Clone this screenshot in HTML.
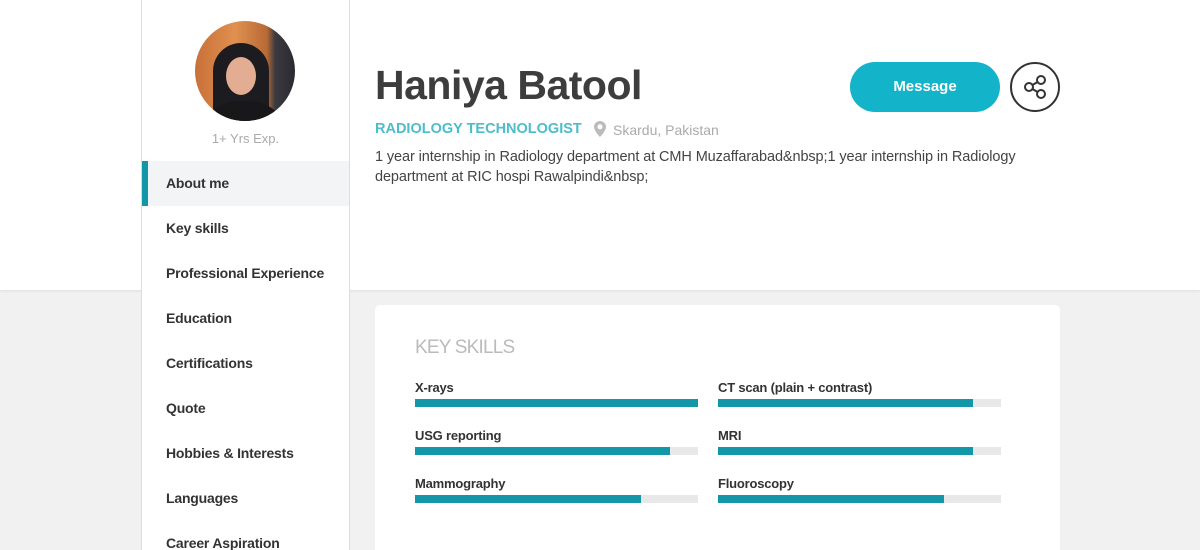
<!DOCTYPE html>
<html><head><style>
*{margin:0;padding:0;box-sizing:border-box}
html,body{width:1200px;height:550px;overflow:hidden}
body{background:#f1f1f1;font-family:"Liberation Sans",sans-serif;position:relative}
.top{position:absolute;left:0;top:0;width:1200px;height:290px;background:#fff;box-shadow:0 1px 3px rgba(0,0,0,.08)}
.side{position:absolute;left:141px;top:0;width:209px;height:550px;background:#fff;border-left:1px solid #ddd;border-right:1px solid #ddd}
.av{position:absolute;left:53px;top:21px;width:100px;height:100px;border-radius:50%;background:linear-gradient(90deg,#c87038,#e09050 40%,#b86a35 72%,#3a3a40 80%,#2a2a30);overflow:hidden}
.av .hj{position:absolute;left:18px;top:22px;width:56px;height:100px;border-radius:28px 28px 10px 10px;background:#1c1c20}
.av .fc{position:absolute;left:31px;top:36px;width:30px;height:38px;border-radius:50%;background:#e2ad92}
.av .sh2{position:absolute;left:4px;top:80px;width:90px;height:40px;border-radius:45px 45px 0 0;background:#18181b}
.exp{position:absolute;top:131px;width:100%;text-align:center;font-size:13px;color:#aaa}
.nav{position:absolute;top:161px;left:0;width:100%}
.nav div{height:45px;line-height:45px;padding-left:24px;font-size:14px;font-weight:bold;color:#333;letter-spacing:-0.2px}
.nav .act{background:#f3f4f6;border-left:6px solid #1297a8;padding-left:18px}
h1{position:absolute;left:375px;top:62px;font-size:41px;color:#3d3d3d;font-weight:bold;letter-spacing:-0.5px}
.role{position:absolute;left:375px;top:121px;font-size:14.5px;color:#4dbccb;font-weight:bold}
.loc{position:absolute;left:594px;top:121px;font-size:14px;color:#aaa}
.desc{position:absolute;left:375px;top:147px;width:690px;font-size:14.5px;line-height:20px;color:#444;letter-spacing:-0.1px}
.msg{position:absolute;left:850px;top:62px;width:150px;height:50px;border-radius:25px;background:#13b3c9;color:#fff;font-weight:bold;font-size:15px;text-align:center;line-height:50px}
.sh{position:absolute;left:1010px;top:62px;width:50px;height:50px;border-radius:50%;border:2px solid #333}
.card{position:absolute;left:375px;top:305px;width:685px;height:260px;background:#fff;border-radius:5px}
.kt{position:absolute;left:40px;top:32px;font-size:19px;color:#bbb;letter-spacing:-0.8px}
.sk{position:absolute;width:283px}
.sk span{display:block;font-size:13px;font-weight:bold;color:#333;height:19px;letter-spacing:-0.2px}
.bar{height:8px;background:#e8e8e8}
.bar i{display:block;height:8px;background:#1297a8}
</style></head><body>
<div class="top"></div>
<div class="side">
<div class="av"><div class="hj"></div><div class="fc"></div><div class="sh2"></div></div>
<div class="exp">1+ Yrs Exp.</div>
<div class="nav">
<div class="act">About me</div><div>Key skills</div><div>Professional Experience</div><div>Education</div><div>Certifications</div><div>Quote</div><div>Hobbies &amp; Interests</div><div>Languages</div><div>Career Aspiration</div>
</div></div>
<h1>Haniya Batool</h1>
<div class="role">RADIOLOGY TECHNOLOGIST</div>
<div class="loc"><svg width="12" height="16" viewBox="0 0 12 16" style="vertical-align:-2px;margin-right:7px"><path d="M6 0C2.7 0 0 2.6 0 5.8 0 10 6 16 6 16s6-6 6-10.2C12 2.6 9.3 0 6 0zm0 8.3A2.5 2.5 0 1 1 6 3.3a2.5 2.5 0 0 1 0 5z" fill="#bbb"/></svg>Skardu, Pakistan</div>
<div class="desc">1 year internship in Radiology department at CMH Muzaffarabad&amp;nbsp;1 year internship in Radiology department at RIC hospi Rawalpindi&amp;nbsp;</div>
<div class="msg">Message</div>
<div class="sh"><svg width="46" height="46" viewBox="0 0 46 46"><g fill="none" stroke="#333" stroke-width="2"><circle cx="17" cy="23" r="4"/><circle cx="29" cy="16" r="4"/><circle cx="29" cy="30" r="4"/><path d="M20.5 21l5-3M20.5 25l5 3"/></g></svg></div>
<div class="card">
<div class="kt">KEY SKILLS</div>
<div class="sk" style="left:40px;top:75px"><span>X-rays</span><div class="bar"><i style="width:100%"></i></div></div>
<div class="sk" style="left:343px;top:75px"><span>CT scan (plain + contrast)</span><div class="bar"><i style="width:90%"></i></div></div>
<div class="sk" style="left:40px;top:123px"><span>USG reporting</span><div class="bar"><i style="width:90%"></i></div></div>
<div class="sk" style="left:343px;top:123px"><span>MRI</span><div class="bar"><i style="width:90%"></i></div></div>
<div class="sk" style="left:40px;top:171px"><span>Mammography</span><div class="bar"><i style="width:80%"></i></div></div>
<div class="sk" style="left:343px;top:171px"><span>Fluoroscopy</span><div class="bar"><i style="width:80%"></i></div></div>
</div>
</body></html>
